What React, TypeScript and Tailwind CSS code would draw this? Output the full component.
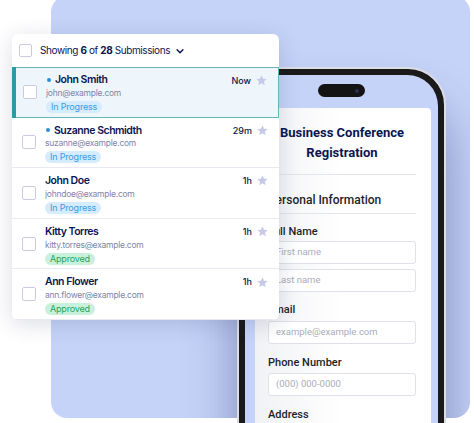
import React from 'react';

type Status = 'progress' | 'approved';

interface Submission {
  name: string;
  email: string;
  time: string;
  status: Status;
  unread?: boolean;
  selected?: boolean;
}

const submissions: Submission[] = [
  { name: 'John Smith', email: 'john@example.com', time: 'Now', status: 'progress', unread: true, selected: true },
  { name: 'Suzanne Schmidth', email: 'suzanne@example.com', time: '29m', status: 'progress', unread: true },
  { name: 'John Doe', email: 'johndoe@example.com', time: '1h', status: 'progress' },
  { name: 'Kitty Torres', email: 'kitty.torres@example.com', time: '1h', status: 'approved' },
  { name: 'Ann Flower', email: 'ann.flower@example.com', time: '1h', status: 'approved' },
];

const Star = () => (
  <svg viewBox="0 0 24 24" className="w-[13px] h-[13px]" fill="#c6c9ea">
    <path d="M12 2.5l2.9 6.1 6.6.8-4.9 4.6 1.3 6.6L12 17.3l-5.9 3.3 1.3-6.6-4.9-4.6 6.6-.8z" />
  </svg>
);

const Checkbox = ({ size = 'w-[14px] h-[14px]' }: { size?: string }) => (
  <span className={`block shrink-0 ${size} rounded-[2px] border border-[#c9cce0] bg-white`} />
);

const SubmissionRow: React.FC<{ item: Submission }> = ({ item }) => {
  const badge =
    item.status === 'progress'
      ? { label: 'In Progress', cls: 'bg-[#d4ecfd] text-[#3a9be2]' }
      : { label: 'Approved', cls: 'bg-[#c8f1dc] text-[#1ea461]' };

  return (
    <div
      className={`relative flex items-center h-[50.6px] pl-[10px] pr-[10px] ${
        item.selected ? 'bg-[#eef6fb] border border-[#63b6ba]' : 'border-b border-[#e9eaf1]'
      }`}
    >
      {item.selected && <span className="absolute left-[-1px] top-[-1px] bottom-[-1px] w-[4px] bg-[#2c9ba6]" />}
      <Checkbox />
      <div className="flex-1 ml-[9px] mt-[2px] flex flex-col">
        <div className="flex items-center h-[14px]">
          {item.unread && <span className="w-[4px] h-[4px] rounded-full bg-[#2a8ed6] ml-[1px] mr-[4px]" />}
          <span className="text-[10.5px] font-semibold tracking-[-0.045em] text-[#0a1551]">{item.name}</span>
        </div>
        <span className="text-[8.5px] leading-[13px] tracking-[-0.03em] text-[#7e84a9]">{item.email}</span>
        <span className={`self-start mt-[1px] h-[12px] leading-[12px] px-[5px] rounded-full text-[9px] tracking-[-0.02em] ${badge.cls}`}>
          {badge.label}
        </span>
      </div>
      <div className="self-start mt-[6px] flex items-center gap-[4px]">
        <span className="text-[9px] font-medium text-[#0a1551]">{item.time}</span>
        <Star />
      </div>
    </div>
  );
};

const Field = ({ placeholder }: { placeholder: string }) => (
  <div className="h-[23px] rounded-[3px] border border-[#dfe1e8] bg-white pl-[7px] flex items-center text-[9.5px] text-[#a9acb8]">
    {placeholder}
  </div>
);

const Label = ({ children, className = '' }: { children: React.ReactNode; className?: string }) => (
  <div className={`text-[11px] leading-[14px] font-medium text-[#1c1f2a] ${className}`}>{children}</div>
);

export default function App() {
  return (
    <div className="relative w-[474px] h-[423px] overflow-hidden bg-white [font-family:Inter,'Noto_Sans',sans-serif]">
      {/* blue backdrop, with the phone's shadow falling on it */}
      <div className="absolute left-[51px] top-[-4px] w-[419px] h-[422px] rounded-[16px] bg-[#c6d3f8] overflow-hidden">
        <div className="absolute left-[186px] top-[71px] w-[209px] h-[420px] rounded-t-[38px] shadow-[0_40px_50px_rgba(40,52,110,0.45)]" />
      </div>

      {/* phone */}
      <div className="absolute left-[237px] top-[67px] w-[209px] h-[400px] rounded-t-[38px] border-2 border-[#dcdee5] bg-[#1a1a1a] p-[6px]">
        <div className="h-full rounded-t-[31px] bg-[#c6d3f8] flex flex-col [font-family:Roboto,'Liberation_Sans',sans-serif]">
          <div className="self-center mt-[9px] w-[47px] h-[13px] rounded-full bg-[#141414] flex items-center justify-end pr-[6px]">
            <span className="w-[4px] h-[4px] rounded-full bg-[#2c2f4a]" />
          </div>
          <div className="mt-[11px] ml-[10px] mr-[7px] flex-1 rounded-t-[4px] bg-gradient-to-r from-[#f1f2f5] via-white to-white pl-[13px] pr-[15px] pt-[15px]">
            <h1 className="text-center text-[13px] leading-[20px] font-bold text-[#0a1551]">
              Business Conference
              <br />
              Registration
            </h1>
            <div className="mt-[11px] h-[1px] bg-[#e3e5ec]" />
            <div className="mt-[17px] text-[12px] leading-[16px] font-medium text-[#1c1f2a]">Personal Information</div>
            <div className="mt-[5px] h-[1px] bg-[#e3e5ec]" />
            <Label className="mt-[11px]">Full Name</Label>
            <div className="mt-[2px] flex flex-col gap-[5px]">
              <Field placeholder="First name" />
              <Field placeholder="Last name" />
            </div>
            <Label className="mt-[11px]">Email</Label>
            <div className="mt-[4px]">
              <Field placeholder="example@example.com" />
            </div>
            <Label className="mt-[12px]">Phone Number</Label>
            <div className="mt-[3px]">
              <Field placeholder="(000) 000-0000" />
            </div>
            <Label className="mt-[12px]">Address</Label>
          </div>
        </div>
      </div>

      {/* submissions list */}
      <div className="absolute left-[12px] top-[34px] w-[267px] rounded-[6px] bg-white shadow-[0_4px_22px_rgba(30,40,90,0.16)] overflow-hidden">
        <div className="h-[33px] flex items-center pl-[7px]">
          <Checkbox size="w-[13px] h-[13px]" />
          <span className="ml-[8px] text-[10px] tracking-[-0.04em] text-[#0a1551]">
            Showing <b>6</b> of <b>28</b> Submissions
          </span>
          <svg viewBox="0 0 24 24" className="ml-[5px] w-[10px] h-[10px]" fill="none" stroke="#0a1551" strokeWidth="3.5" strokeLinecap="round" strokeLinejoin="round">
            <path d="M5 9l7 7 7-7" />
          </svg>
        </div>
        {submissions.map((s) => (
          <SubmissionRow key={s.email} item={s} />
        ))}
      </div>
    </div>
  );
}
